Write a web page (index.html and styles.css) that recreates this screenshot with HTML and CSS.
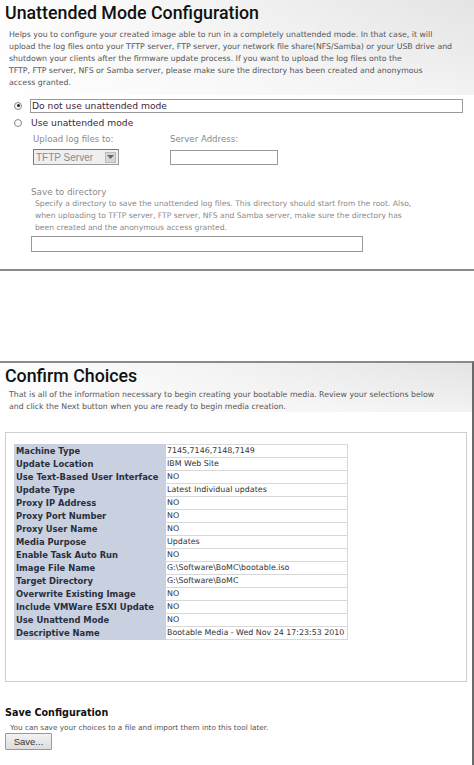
FILE: index.html
```html
<!DOCTYPE html>
<html>
<head>
<meta charset="utf-8">
<link rel="stylesheet" href="styles.css">
</head>
<body>
<div class="page">
  <section class="panel panel-top">
    <div class="head">
      <h1 class="title">Unattended Mode Configuration</h1>
      <p class="desc">Helps you to configure your created image able to run in a completely unattended mode. In that case, it will upload the log files onto your TFTP server, FTP server, your network file share(NFS/Samba) or your USB drive and shutdown your clients after the firmware update process. If you want to upload the log files onto the<br>TFTP, FTP server, NFS or Samba server, please make sure the directory has been created and anonymous<br>access granted.</p>
    </div>
    <div class="options">
      <div class="radio-row">
        <span class="radio checked"></span>
        <span class="radio-label focused">Do not use unattended mode</span>
      </div>
      <div class="radio-row">
        <span class="radio"></span>
        <span class="radio-label">Use unattended mode</span>
      </div>
      <div class="fields">
        <div class="field field-upload">
          <div class="field-label">Upload log files to:</div>
          <div class="select"><span class="select-text">TFTP Server</span><span class="select-btn"><svg width="7" height="4" viewBox="0 0 7 4"><path d="M0 0h7L3.5 4z" fill="#666"/></svg></span></div>
        </div>
        <div class="field field-server">
          <div class="field-label">Server Address:</div>
          <div class="textbox textbox-server"></div>
        </div>
      </div>
      <div class="dir">
        <div class="field-label dir-label">Save to directory</div>
        <p class="dir-desc">Specify a directory to save the unattended log files. This directory should start from the root. Also, when uploading to TFTP server, FTP server, NFS and Samba server, make sure the directory has<br>been created and the anonymous access granted.</p>
        <div class="textbox textbox-dir"></div>
      </div>
    </div>
  </section>

  <section class="panel panel-bottom">
    <div class="head head-bottom">
      <h1 class="title">Confirm Choices</h1>
      <p class="desc">That is all of the information necessary to begin creating your bootable media. Review your selections below and click the Next button when you are ready to begin media creation.</p>
    </div>
    <div class="summary-box">
      <table class="summary">
        <tr><th>Machine Type</th><td>7145,7146,7148,7149</td></tr>
        <tr><th>Update Location</th><td>IBM Web Site</td></tr>
        <tr><th>Use Text-Based User Interface</th><td>NO</td></tr>
        <tr><th>Update Type</th><td>Latest Individual updates</td></tr>
        <tr><th>Proxy IP Address</th><td>NO</td></tr>
        <tr><th>Proxy Port Number</th><td>NO</td></tr>
        <tr><th>Proxy User Name</th><td>NO</td></tr>
        <tr><th>Media Purpose</th><td>Updates</td></tr>
        <tr><th>Enable Task Auto Run</th><td>NO</td></tr>
        <tr><th>Image File Name</th><td>G:\Software\BoMC\bootable.iso</td></tr>
        <tr><th>Target Directory</th><td>G:\Software\BoMC</td></tr>
        <tr><th>Overwrite Existing Image</th><td>NO</td></tr>
        <tr><th>Include VMWare ESXI Update</th><td>NO</td></tr>
        <tr><th>Use Unattend Mode</th><td>NO</td></tr>
        <tr><th>Descriptive Name</th><td>Bootable Media - Wed Nov 24 17:23:53 2010</td></tr>
      </table>
    </div>
    <div class="save">
      <h2 class="save-title">Save Configuration</h2>
      <p class="save-desc">You can save your choices to a file and import them into this tool later.</p>
      <button class="save-btn">Save...</button>
    </div>
  </section>
</div>
</body>
</html>
```
FILE: styles.css
```css
html, body {
  margin: 0;
  padding: 0;
  background: #fff;
}
.page {
  width: 474px;
  height: 765px;
  overflow: hidden;
  font-family: "DejaVu Sans", "Noto Sans", sans-serif;
  position: relative;
}
.head {
  background:
    linear-gradient(to right, rgba(255,255,255,0.95) 0%, rgba(255,255,255,0.6) 40%, rgba(255,255,255,0) 100%),
    linear-gradient(to bottom, #e4e4e4 0%, #ececec 60%, #f3f3f3 100%);
  padding: 1px 0 0 0;
}
.title {
  margin: 0;
  padding-left: 5px;
  font-family: "Roboto", "Noto Sans", sans-serif;
  font-weight: 500;
  font-size: 17.8px;
  line-height: 24px;
  color: #111;
}
.desc {
  margin: 0;
  padding: 4px 20px 14px 9px;
  font-size: 7.8px;
  line-height: 12px;
  color: #555;
}
.panel-top {
  border-bottom: 2px solid #8a8a8a;
  height: 271px;
  box-sizing: border-box;
}
.panel-top .head {
  height: 95px;
  box-sizing: border-box;
}
.options {
  padding: 2px 0 0 14px;
}
.radio-row {
  display: flex;
  align-items: center;
  height: 17px;
}
.radio {
  width: 8px;
  height: 8px;
  border: 1px solid #888;
  border-radius: 50%;
  box-sizing: border-box;
  position: relative;
  margin-right: 8px;
  background: #fafafa;
}
.radio.checked::after {
  content: "";
  position: absolute;
  left: 1.5px;
  top: 1.5px;
  width: 3px;
  height: 3px;
  border-radius: 50%;
  background: #222;
}
.radio-label {
  font-size: 9.2px;
  color: #3d1f3d;
  line-height: 12px;
  padding: 0 1px;
}
.radio-label.focused {
  flex: 1;
  border: 1px solid #999;
  margin-right: 11px;
}
.fields {
  display: flex;
  padding-left: 19px;
  margin-top: 2px;
}
.field-label {
  font-size: 8.6px;
  color: #8a8a8a;
  line-height: 12px;
}
.field-upload {
  width: 137px;
}
.select {
  margin-top: 4px;
  width: 86px;
  height: 16px;
  box-sizing: border-box;
  border: 1px solid #9a9a9a;
  border-top-color: #777;
  border-left-color: #777;
  background: #efefef;
  display: flex;
  align-items: center;
  justify-content: space-between;
  padding: 0 2px 0 2px;
}
.select-text {
  font-family: "Liberation Sans", Arial, sans-serif;
  font-size: 10px;
  color: #8a8a8a;
}
.select-btn {
  width: 11px;
  height: 11px;
  background: #d6d6d6;
  border: 1px solid #bbb;
  box-sizing: border-box;
  display: flex;
  align-items: center;
  justify-content: center;
}
.textbox {
  border: 1px solid #999;
  background: #fff;
  box-sizing: border-box;
}
.textbox-server {
  margin-top: 5px;
  width: 108px;
  height: 15px;
}
.dir {
  margin-top: 21px;
  padding-left: 17px;
}
.dir-label {
  font-size: 8.8px;
}
.dir-desc {
  margin: 0;
  padding: 0 0 0 4px;
  font-size: 7.63px;
  line-height: 12px;
  color: #8a8a8a;
  width: 396px;
}
.textbox-dir {
  width: 332px;
  height: 16px;
  margin-top: 2px;
}

.panel-bottom {
  margin-top: 90px;
  border-top: 2px solid #8a8a8a;
  border-right: 2px solid #6a6a6a;
  height: 420px;
  box-sizing: border-box;
}
.head-bottom {
  height: 49px;
  box-sizing: border-box;
}
.head-bottom .desc {
  padding-top: 1px;
  padding-right: 32px;
  padding-bottom: 0;
}
.summary-box {
  margin: 20px 5px 0 5px;
  border: 1px solid #cfcfcf;
  height: 250px;
  box-sizing: border-box;
  padding: 11px 0 0 8px;
}
.summary {
  border-collapse: collapse;
  background: #fff;
}
.summary th,
.summary td {
  height: 12px;
  padding: 0 2px;
  line-height: 12px;
  white-space: nowrap;
}
.summary th {
  background: #c9d1e1;
  text-align: left;
  font-size: 8.4px;
  font-weight: bold;
  color: #2b2f3b;
  width: 147px;
  border-right: 1px solid #c9d1e1;
}
.summary td {
  border: 1px solid #d8d8d8;
  font-size: 7.9px;
  color: #333;
  width: 178px;
  padding-left: 1px;
}
.summary tr:first-child th { border-top: 1px solid #c9d1e1; }
.save {
  padding: 24px 0 0 5px;
}
.save-title {
  margin: 0;
  font-size: 9.6px;
  font-weight: bold;
  color: #111;
  line-height: 14px;
  padding-bottom: 2px;
}
.save-desc {
  margin: 0;
  padding-left: 5px;
  font-size: 7.3px;
  color: #555;
  line-height: 11px;
}
.save-btn {
  display: block;
  width: 47px;
  height: 17px;
  padding: 0;
  font-family: "Liberation Sans", Arial, sans-serif;
  font-size: 9.5px;
  color: #333;
  background: linear-gradient(#f2f2f2, #dedede);
  border: 1px solid #999;
  border-radius: 1px;
}
```
